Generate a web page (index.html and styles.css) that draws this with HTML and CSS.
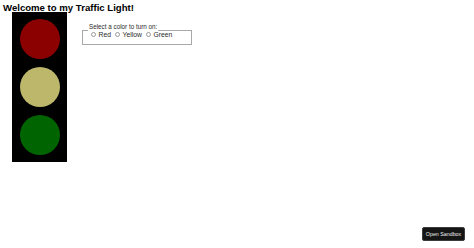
FILE: index.html
```html
<!DOCTYPE html>
<html lang="en">
<head>
<meta charset="utf-8">
<title>Traffic Light</title>
<link rel="stylesheet" href="styles.css">
</head>
<body>
<h1 class="title">Welcome to my Traffic Light!</h1>
<div class="app">
  <div class="light">
    <div class="lamp lamp-red"></div>
    <div class="lamp lamp-yellow"></div>
    <div class="lamp lamp-green"></div>
  </div>
  <fieldset class="picker">
    <legend class="picker-legend"><span class="legend-text">Select a color to turn on:</span></legend>
    <div class="options">
      <label class="option"><input type="radio" name="color" class="radio">Red</label>
      <label class="option"><input type="radio" name="color" class="radio">Yellow</label>
      <label class="option"><input type="radio" name="color" class="radio">Green</label>
    </div>
  </fieldset>
</div>
<button class="sandbox-btn" type="button">Open Sandbox</button>
</body>
</html>
```

FILE: styles.css
```css
html, body {
  margin: 0;
  padding: 0;
  background: #ffffff;
  font-family: "Liberation Sans", Arial, sans-serif;
  color: #000;
}

.title {
  margin: 0 0 0 3px;
  padding-top: 3px;
  font-size: 9.6px;
  line-height: 9px;
  font-weight: bold;
  position: relative;
  z-index: 1;
}

.app {
  display: flex;
  align-items: flex-start;
  padding-left: 12px;
}

.light {
  display: flex;
  flex-direction: column;
  gap: 8px;
  padding: 7px 7.5px;
  background: #000;
  width: 40px;
}

.lamp {
  width: 40px;
  height: 40px;
  border-radius: 50%;
}

.lamp-red { background: #8b0000; }
.lamp-yellow { background: #bdb76b; }
.lamp-green { background: #006400; }

.picker {
  margin: 18px 0 0 15px;
  padding: 0 6px 6px 8px;
  border: 1px solid #a9a9a9;
  width: 94px;
  min-width: 0;
}

.picker-legend {
  padding: 0 1px;
  margin-left: -3px;
  font-size: 6.3px;
  line-height: 1px;
  color: #2a2a2a;
}

.legend-text {
  display: inline-block;
  transform: translateY(-4.5px);
}

.options {
  display: flex;
  align-items: center;
  font-size: 6.8px;
  line-height: 7px;
  color: #2a2a2a;
  padding-top: 0;
}

.option {
  display: inline-flex;
  align-items: center;
  margin-right: 4px;
}

.radio {
  appearance: none;
  -webkit-appearance: none;
  width: 5px;
  height: 5px;
  margin: 0 2.5px 0 0;
  border: 0.7px solid #9a9a9a;
  border-radius: 50%;
  background: #fff;
  box-sizing: border-box;
}

.sandbox-btn {
  position: fixed;
  right: 9px;
  bottom: 7px;
  width: 43px;
  height: 14px;
  padding: 0;
  border: 1px solid #3c3c3c;
  border-radius: 2px;
  background: #151515;
  color: #f0f0f0;
  font-family: "Liberation Sans", Arial, sans-serif;
  font-size: 5.3px;
  line-height: 12px;
}
```
